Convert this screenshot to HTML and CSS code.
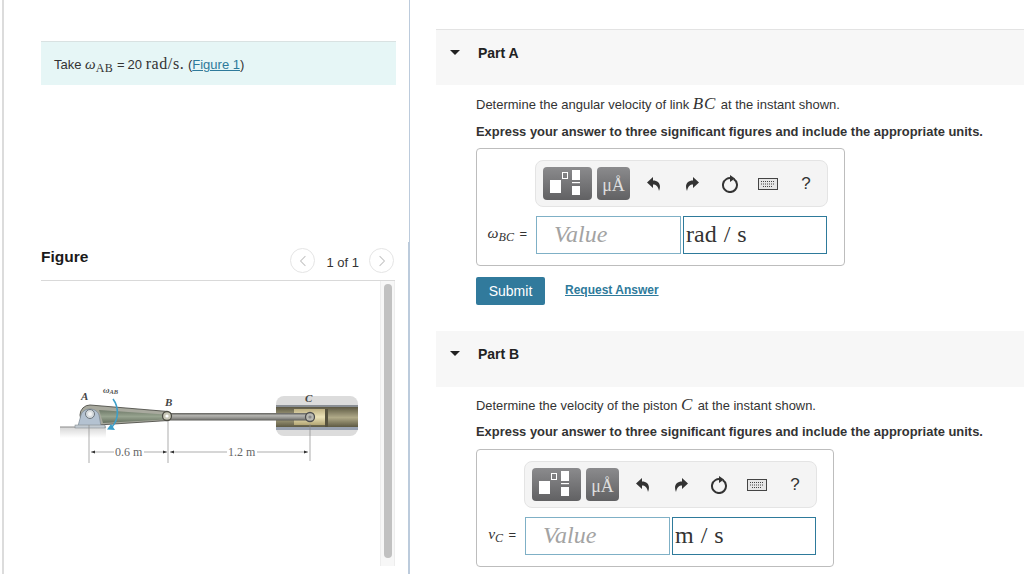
FILE: index.html
```html
<!DOCTYPE html>
<html lang="en">
<head>
<meta charset="utf-8">
<title>Part A and Part B</title>
<link rel="stylesheet" href="styles.css">
</head>
<body>
<div class="page">
  <aside class="left">
    <div class="callout">Take <span class="math"><i>ω</i><sub>AB</sub></span><span class="eq">=</span>20 <span class="math rad">rad/s.</span> (<a href="#">Figure 1</a>)</div>
    <div class="figure-head">
      <h2>Figure</h2>
      <div class="pager">
        <span class="circle"><svg viewBox="0 0 10 14" width="8" height="12"><path d="M8 1 2 7l6 6" fill="none" stroke="#c4c4c4" stroke-width="1.3"/></svg></span>
        <span class="count">1 of 1</span>
        <span class="circle"><svg viewBox="0 0 10 14" width="8" height="12"><path d="M2 1l6 6-6 6" fill="none" stroke="#c4c4c4" stroke-width="1.3"/></svg></span>
      </div>
    </div>
    <div class="figure-body">
      <svg class="diagram" viewBox="41 385 339 80" width="339" height="80">
        <defs>
          <linearGradient id="link" x1="0" y1="0" x2="0" y2="1"><stop offset="0" stop-color="#6f7a69"/><stop offset=".5" stop-color="#97a38f"/><stop offset="1" stop-color="#667060"/></linearGradient>
          <linearGradient id="rod" x1="0" y1="0" x2="0" y2="1"><stop offset="0" stop-color="#5f5f5c"/><stop offset=".35" stop-color="#b5b5b1"/><stop offset=".7" stop-color="#8f8f8b"/><stop offset="1" stop-color="#5a5a57"/></linearGradient>
          <linearGradient id="tan" x1="0" y1="0" x2="0" y2="1"><stop offset="0" stop-color="#bdb082"/><stop offset=".5" stop-color="#ece3b8"/><stop offset="1" stop-color="#b3a674"/></linearGradient>
          <linearGradient id="dark" x1="0" y1="0" x2="0" y2="1"><stop offset="0" stop-color="#5c5843"/><stop offset=".5" stop-color="#b0aa88"/><stop offset="1" stop-color="#55513c"/></linearGradient>
          <linearGradient id="ground" x1="0" y1="0" x2="0" y2="1"><stop offset="0" stop-color="#d6d6d6"/><stop offset="1" stop-color="#fff"/></linearGradient>
          <filter id="soft"><feGaussianBlur stdDeviation=".45"/></filter>
        </defs>
        <g filter="url(#soft)">
          <rect x="60" y="427" width="46" height="11" fill="url(#ground)"/>
          <path d="M60 427h46" stroke="#8a8a8a"/>
          <rect x="276" y="396" width="82" height="40" rx="8" fill="#dcdcdc"/>
          <rect x="276" y="405" width="82" height="25" fill="#8a8f95"/>
          <rect x="276" y="407" width="82" height="21" fill="url(#dark)"/>
          <rect x="294" y="409" width="34" height="16" fill="url(#tan)"/>
          <rect x="325" y="409" width="3" height="18" fill="#55513c"/>
          <rect x="276" y="427" width="82" height="3" fill="#9aa3b2"/>
          <path d="M90 405 168 411.500v9l-70 4.500-8 0a10 10 0 0 1 0-20z" fill="#a8a99e" stroke="#4f4f4a" stroke-width=".9"/>
          <path d="M99 410 165 414.500v5l-62 3.500z" fill="url(#link)"/>
          <path d="M78 426l3-11c1-3 4-6 9-6s8 3 9 6l2 11z" fill="#b4c2d1" stroke="#7b8894" stroke-width=".7"/>
          <circle cx="90" cy="414" r="4.500" fill="#d7dcdf" stroke="#6b747c"/>
          <circle cx="90" cy="414" r="2" fill="#f3f3f3"/>
          <rect x="75" y="425" width="30" height="3" fill="#c3cbd2" stroke="#7a7f85" stroke-width=".5"/>
          <rect x="168" y="413" width="142" height="7.500" fill="url(#rod)"/>
          <circle cx="167" cy="416" r="4.500" fill="#c9c8b8" stroke="#4d4d45" stroke-width="1.300"/>
          <circle cx="167" cy="416" r="1.600" fill="#fff"/>
          <circle cx="310" cy="417" r="4.500" fill="#b9b9b2" stroke="#4d4d4d" stroke-width="1.300"/>
          <circle cx="310" cy="417" r="1.600" fill="#888"/>
          <path d="M113 399c6 8 6 20-1 28" fill="none" stroke="#3c9fc9" stroke-width="1.600"/>
          <path d="M111 424l4 6-8-.5z" fill="#3c9fc9"/>
        </g>
        <g class="dim">
          <path d="M89 425v38M168 421v42M310 424v37M91 452h23M144 452h23M170 452h57M257 452h51"/>
        </g>
        <path class="tick" d="M91 452l4-1.500v3zM167 452l-4-1.500v3zM170 452l4-1.500v3zM308 452l-4-1.500v3z"/>
        <text class="lbl" x="81" y="400">A</text>
        <text class="lbl" x="165" y="406">B</text>
        <text class="lbl" x="305" y="402">C</text>
        <text class="lbl-small" x="103" y="393">ω<tspan dy="1" font-size="6.500">AB</tspan></text>
        <text class="dimtext" x="115" y="456">0.6 m</text>
        <text class="dimtext" x="228" y="456">1.2 m</text>
      </svg>
      <div class="track"><div class="thumb"></div></div>
    </div>
  </aside>
  <main class="right">
    <section class="part part-a">
      <header class="part-head"><span class="caret"></span><h3>Part A</h3></header>
      <div class="part-body">
        <p class="q">Determine the angular velocity of link <span class="math big"><i>BC</i></span> at the instant shown.</p>
        <p class="q strong">Express your answer to three significant figures and include the appropriate units.</p>
        <div class="answer">
          <div class="toolbar">
            <span class="tbtn tpl"><svg viewBox="0 0 49 33" width="49" height="33"><rect x="7" y="13" width="11" height="13" fill="#fff"/><rect x="19.500" y="5.500" width="5" height="6" fill="none" stroke="#fff"/><rect x="29" y="3" width="8" height="10" fill="#fff"/><rect x="29" y="15" width="8" height="1.200" fill="#fff"/><rect x="29" y="19" width="8" height="9" fill="#fff"/></svg></span>
            <span class="tbtn unit-btn">μÅ</span>
            <span class="ticon"><svg viewBox="0 0 14 14" width="14" height="14"><path d="M6 0 0 5.500 6 11V7.500c3 0 5 1.500 6 6.500 2.500-6 0-10.500-6-10.500z" fill="#333"/></svg></span>
            <span class="ticon"><svg viewBox="0 0 14 14" width="14" height="14"><path d="M8 0l6 5.500L8 11V7.500c-3 0-5 1.500-6 6.500-2.500-6 0-10.500 6-10.500z" fill="#333"/></svg></span>
            <span class="ticon"><svg viewBox="0 0 18 18" width="18" height="18"><path d="M12.800 4.200A7 7 0 1 1 5.500 4A7 7 0 0 1 9 3" fill="none" stroke="#333" stroke-width="2"/><path d="M9 0l5 3.500L9 7z" fill="#333"/></svg></span>
            <span class="ticon"><svg viewBox="0 0 20 12" width="20" height="12"><rect x=".5" y=".5" width="19" height="11" fill="#e6e6e6" stroke="#444"/><path d="M3 3.500h14M3 6h14M5 8.500h10" stroke="#444" stroke-dasharray="1 1" fill="none"/></svg></span>
            <span class="ticon help">?</span>
          </div>
          <div class="row">
            <label class="lab"><span class="math"><i>ω</i><sub><i>BC</i></sub></span><span class="eq">=</span></label>
            <span class="field value">Value</span>
            <span class="field units">rad / s</span>
          </div>
        </div>
        <div class="actions"><button class="submit">Submit</button><a class="req" href="#">Request Answer</a></div>
      </div>
    </section>
    <section class="part part-b">
      <header class="part-head"><span class="caret"></span><h3>Part B</h3></header>
      <div class="part-body">
        <p class="q">Determine the velocity of the piston <span class="math big"><i>C</i></span> at the instant shown.</p>
        <p class="q strong">Express your answer to three significant figures and include the appropriate units.</p>
        <div class="answer">
          <div class="toolbar">
            <span class="tbtn tpl"><svg viewBox="0 0 49 33" width="49" height="33"><rect x="7" y="13" width="11" height="13" fill="#fff"/><rect x="19.500" y="5.500" width="5" height="6" fill="none" stroke="#fff"/><rect x="29" y="3" width="8" height="10" fill="#fff"/><rect x="29" y="15" width="8" height="1.200" fill="#fff"/><rect x="29" y="19" width="8" height="9" fill="#fff"/></svg></span>
            <span class="tbtn unit-btn">μÅ</span>
            <span class="ticon"><svg viewBox="0 0 14 14" width="14" height="14"><path d="M6 0 0 5.500 6 11V7.500c3 0 5 1.500 6 6.500 2.500-6 0-10.500-6-10.500z" fill="#333"/></svg></span>
            <span class="ticon"><svg viewBox="0 0 14 14" width="14" height="14"><path d="M8 0l6 5.500L8 11V7.500c-3 0-5 1.500-6 6.500-2.500-6 0-10.500 6-10.500z" fill="#333"/></svg></span>
            <span class="ticon"><svg viewBox="0 0 18 18" width="18" height="18"><path d="M12.800 4.200A7 7 0 1 1 5.500 4A7 7 0 0 1 9 3" fill="none" stroke="#333" stroke-width="2"/><path d="M9 0l5 3.500L9 7z" fill="#333"/></svg></span>
            <span class="ticon"><svg viewBox="0 0 20 12" width="20" height="12"><rect x=".5" y=".5" width="19" height="11" fill="#e6e6e6" stroke="#444"/><path d="M3 3.500h14M3 6h14M5 8.500h10" stroke="#444" stroke-dasharray="1 1" fill="none"/></svg></span>
            <span class="ticon help">?</span>
          </div>
          <div class="row">
            <label class="lab"><span class="math"><i>v</i><sub><i>C</i></sub></span><span class="eq">=</span></label>
            <span class="field value">Value</span>
            <span class="field units">m / s</span>
          </div>
        </div>
      </div>
    </section>
  </main>
</div>
</body>
</html>
```
FILE: styles.css
```css
* { box-sizing: border-box; }
html, body { margin: 0; height: 574px; overflow: hidden; background: #fff; }
body { font-family: "Liberation Sans", Arial, sans-serif; font-size: 13px; color: #333; }
.page { display: flex; height: 574px; }
.left { position: relative; width: 408px; height: 574px; margin-left: 2px; padding: 41px 14px 0 37px; border-left: 2px solid #dcdcdc; border-right: 1px solid #bccbdc; flex: none; display: flex; flex-direction: column; }
.left::after { content: ""; position: absolute; right: 0; top: 242px; bottom: 0; width: 1px; background: #bccbdc; }
.callout { height: 44px; margin-right: -1px; background: #e6f6f6; border-top: 1px solid #d9e2e2; padding: 14px 13px 0; line-height: 16px; color: #333; white-space: nowrap; }
.callout a { color: #2e7a9b; text-decoration: underline; }
.math { font-family: "Liberation Serif", serif; font-size: 15px; }
.math sub { font-size: 12px; line-height: 0; vertical-align: -3px; letter-spacing: .3px; }
.rad { font-size: 16px; letter-spacing: .6px; }
.eq { margin: 0 3px 0 4px; }
.figure-head { margin-top: 160px; height: 36px; border-bottom: 1px solid #d9d9d9; display: flex; justify-content: space-between; }
.figure-head h2 { margin: 2px 0 0; font-size: 15.500px; line-height: 20px; color: #1a1a1a; font-weight: bold; }
.pager { display: flex; align-items: flex-start; padding: 3px 1px 0 0; }
.circle { width: 25px; height: 25px; border: 1px solid #e5e5e5; border-radius: 50%; display: flex; align-items: center; justify-content: center; }
.count { font-size: 13px; line-height: 25px; padding: 2px 10px 0 11px; color: #333; }
.figure-body { height: 285px; display: flex; align-items: flex-start; }
.diagram { display: block; margin-top: 104px; flex: none; }
.track { width: 15px; height: 285px; background: #f7f7f7; border-left: 1px solid #ededed; border-right: 1px solid #ededed; padding: 3px 0 0 3px; }
.thumb { width: 8px; height: 274px; background: #c1c1c1; border-radius: 4px; }
.dim path { fill: none; stroke: #8a8a8a; stroke-width: .7; }
.tick { fill: #333; }
.lbl { font-family: "Liberation Serif", serif; font-style: italic; font-weight: bold; font-size: 11px; fill: #444; }
.lbl-small { font-family: "Liberation Serif", serif; font-style: italic; font-weight: bold; font-size: 9px; fill: #555; }
.dimtext { font-family: "Liberation Serif", serif; font-size: 12px; fill: #666; }
.right { flex: 1; padding: 29px 0 0 26px; min-width: 0; }
.part-head { height: 56px; background: #f7f7f7; border-top: 1px solid #e3e3e3; display: flex; align-items: flex-start; padding: 15px 0 0 14px; }
.part-b .part-head { border-top-color: #f7f7f7; padding-top: 14px; }
.caret { width: 0; height: 0; margin-top: 5px; border-left: 5.500px solid transparent; border-right: 5.500px solid transparent; border-top: 5.500px solid #222; }
.part-head h3 { margin: 0 0 0 18px; font-size: 14px; line-height: 17px; color: #222; font-weight: bold; }
.part-body { padding: 10px 0 0 40px; }
.part-b .part-body { padding-top: 9px; }
.q { margin: 0; font-size: 13px; line-height: 18px; color: #333; white-space: nowrap; }
.part-b .q { font-size: 12.900px; }
.q.strong, .part-b .q.strong { margin-top: 9px; font-weight: bold; font-size: 12.930px; }
.part-b .q.strong { margin-top: 8px; }
.math.big { font-size: 17px; letter-spacing: .8px; margin-right: 1px; }
.answer { display: inline-grid; margin-top: 7px; padding: 11px 17px 11px 10px; border: 1px solid #bdbdbd; border-radius: 4px; }
.part-a .answer { width: 369px; }
.part-b .answer { width: 358px; margin-top: 8px; }
.toolbar { justify-self: end; width: 293px; height: 47px; margin-right: -1px; background: #f4f4f4; border: 1px solid #e4e4e4; border-radius: 8px; display: flex; align-items: center; padding-left: 7px; }
.tbtn { height: 33px; border-radius: 4px; background: linear-gradient(#8b8b8d, #616163); color: #fff; display: flex; align-items: center; justify-content: center; flex: none; }
.tpl { width: 49px; }
.unit-btn { width: 33px; margin: 0 5px 0 5px; padding-top: 3px; font-family: "Liberation Serif", serif; font-size: 18px; color: #dedede; }
.ticon { width: 38px; height: 24px; display: flex; align-items: center; justify-content: center; flex: none; }
.help { font-size: 17px; color: #333; font-family: "Liberation Sans", sans-serif; }
.row { display: flex; align-items: center; margin-top: 9px; justify-content: flex-end; }
.lab { margin: 0 9px 4px 0; font-size: 13px; white-space: nowrap; }
.lab .math { font-size: 15.500px; }
.lab .eq { margin: 0 0 0 5px; }
.field { height: 38px; border: 1px solid #2e7a9b; width: 145px; font-family: "Liberation Serif", serif; font-size: 24px; line-height: 35px; }
.value { border-color: #7fb0c6; padding-left: 17px; color: #a3a3a3; font-style: italic; }
.units { margin-left: 2px; padding-left: 2px; width: 144px; color: #333; word-spacing: 1px; }
.actions { display: flex; align-items: flex-start; margin-top: 11px; height: 54px; }
.submit { width: 69px; height: 28px; border: 0; padding: 0; border-radius: 2px; background: #317a9c; color: #fff; font: 14px "Liberation Sans", sans-serif; }
.req { margin: 6px 0 0 20px; font-weight: bold; font-size: 12px; color: #2e7a9b; text-decoration: underline; }
```
